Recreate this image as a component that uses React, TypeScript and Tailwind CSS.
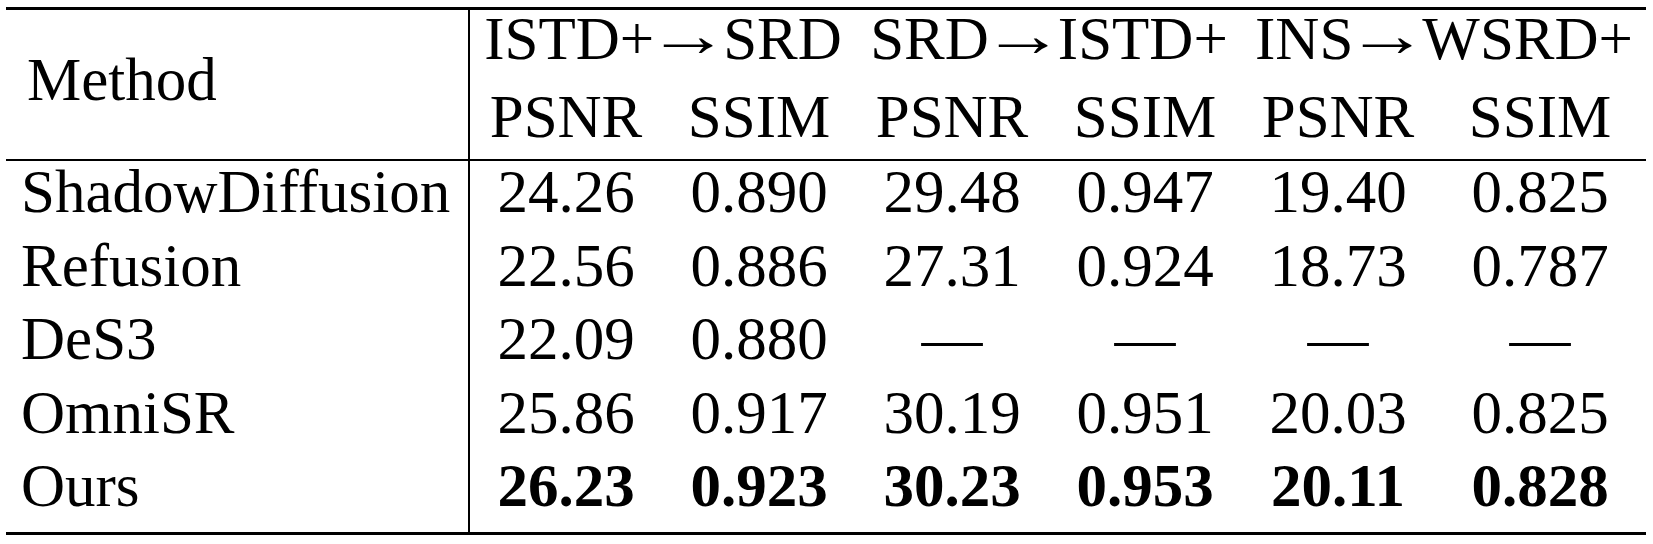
const groups = [
  ["ISTD+", "SRD"],
  ["SRD", "ISTD+"],
  ["INS", "WSRD+"],
];
const metrics = ["PSNR", "SSIM", "PSNR", "SSIM", "PSNR", "SSIM"];

// results table rows
const rows = [
  { name: "ShadowDiffusion", vals: ["24.26", "0.890", "29.48", "0.947", "19.40", "0.825"], bold: false },
  { name: "Refusion", vals: ["22.56", "0.886", "27.31", "0.924", "18.73", "0.787"], bold: false },
  { name: "DeS3", vals: ["22.09", "0.880", "—", "—", "—", "—"], bold: false },
  { name: "OmniSR", vals: ["25.86", "0.917", "30.19", "0.951", "20.03", "0.825"], bold: false },
  { name: "Ours", vals: ["26.23", "0.923", "30.23", "0.953", "20.11", "0.828"], bold: true },
];

export default function App() {
  return (
    <div
      className="w-[1653px] h-[544px] bg-white text-black pt-[7px] pl-[6px] text-[61px]"
      style={{ fontFamily: "'Liberation Serif', 'Times New Roman', serif" }}
    >
      <div className="w-[1640px]">
        {/* top rule */}
        <div className="h-[3px] bg-black" />

        {/* header */}
        <div className="flex">
          <div className="w-[464px] border-r-2 border-black flex items-center pl-[21px] pb-[10px]">
            Method
          </div>
          <div className="grid grid-cols-[192px_194px_192px_194px_192px_212px] pb-[9px]">
            {groups.map(([a, b]) => (
              <div key={a + b} className="col-span-2 text-center leading-[58px] whitespace-nowrap">
                {a}
                <span className="inline-block mx-[4px] scale-x-[1.35] -translate-y-[3px]">→</span>
                {b}
              </div>
            ))}
            {metrics.map((m, i) => (
              <div key={i} className="text-center leading-[66px] mt-[16px]">
                {m}
              </div>
            ))}
          </div>
        </div>

        {/* mid rule */}
        <div className="h-[2px] bg-black" />

        {/* body */}
        <div className="flex">
          <div className="w-[464px] border-r-2 border-black pl-[15px] pb-[3.5px]">
            {rows.map((r) => (
              <div key={r.name} className="h-[73.5px] leading-[62px]">
                {r.name}
              </div>
            ))}
          </div>
          <div className="grid grid-cols-[192px_194px_192px_194px_192px_212px] auto-rows-[73.5px]">
            {rows.map((r) =>
              r.vals.map((v, i) => (
                <div
                  key={r.name + i}
                  className={r.bold ? "text-center leading-[62px] font-bold" : "text-center leading-[62px]"}
                >
                  {v}
                </div>
              ))
            )}
          </div>
        </div>

        {/* bottom rule */}
        <div className="h-[3px] bg-black" />
      </div>
    </div>
  );
}
